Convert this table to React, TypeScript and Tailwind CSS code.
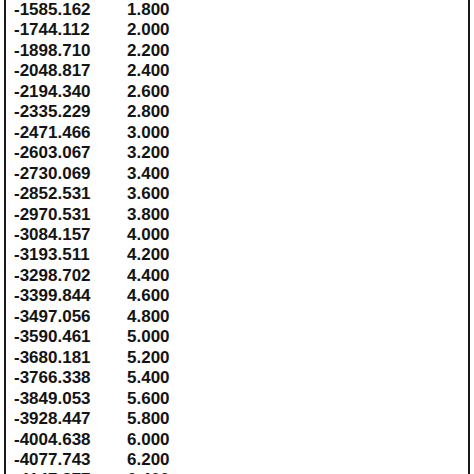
const rows: [string, string][] = [
  ['-1585.162', '1.800'],
  ['-1744.112', '2.000'],
  ['-1898.710', '2.200'],
  ['-2048.817', '2.400'],
  ['-2194.340', '2.600'],
  ['-2335.229', '2.800'],
  ['-2471.466', '3.000'],
  ['-2603.067', '3.200'],
  ['-2730.069', '3.400'],
  ['-2852.531', '3.600'],
  ['-2970.531', '3.800'],
  ['-3084.157', '4.000'],
  ['-3193.511', '4.200'],
  ['-3298.702', '4.400'],
  ['-3399.844', '4.600'],
  ['-3497.056', '4.800'],
  ['-3590.461', '5.000'],
  ['-3680.181', '5.200'],
  ['-3766.338', '5.400'],
  ['-3849.053', '5.600'],
  ['-3928.447', '5.800'],
  ['-4004.638', '6.000'],
  ['-4077.743', '6.200'],
  ['-4147.877', '6.400'],
];

export default function App() {
  return (
    <div className="h-[474px] w-[474px] overflow-hidden bg-white">
      <div className="ml-[4px] h-full w-[466px] border-x-2 border-[#1a1a1a] pl-[8px] font-['Liberation_Sans',Arial,sans-serif] text-[17px] font-bold leading-[20.45px] text-[#141414]">
        {/* Table rows */}
        <div className="grid grid-cols-[113px_auto]">
          {rows.map(([energy, dist]) => (
            <div key={energy} className="contents">
              <span>{energy}</span>
              <span>{dist}</span>
            </div>
          ))}
        </div>
      </div>
    </div>
  );
}
